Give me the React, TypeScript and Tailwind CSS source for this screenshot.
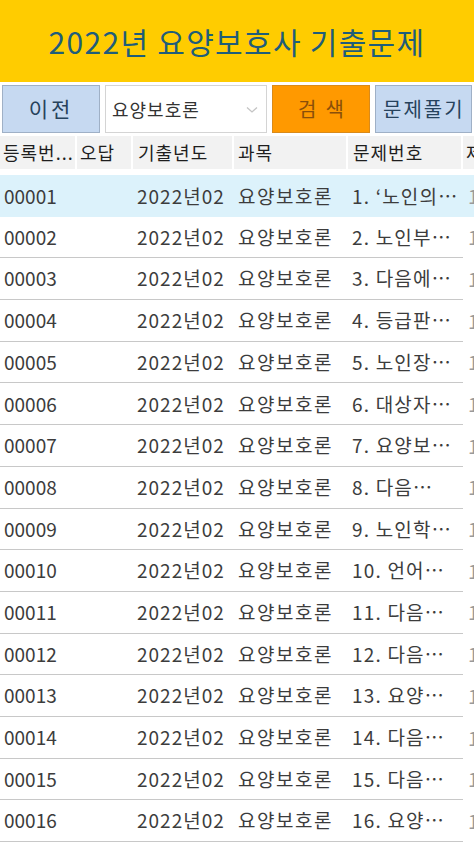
import React from "react";

const FONT = { fontFamily: '"Noto Sans CJK KR", "Noto Sans", sans-serif' };

const questions = [
  "1. ‘노인의…",
  "2. 노인부…",
  "3. 다음에…",
  "4. 등급판…",
  "5. 노인장…",
  "6. 대상자…",
  "7. 요양보…",
  "8. 다음…",
  "9. 노인학…",
  "10. 언어…",
  "11. 다음…",
  "12. 다음…",
  "13. 요양…",
  "14. 다음…",
  "15. 다음…",
  "16. 요양…",
];

export default function App() {
  return (
    <div className="w-[474px] h-[846px] overflow-hidden bg-white" style={FONT}>
      {/* 상단 타이틀 */}
      <div className="h-[82px] bg-[#ffcc00] flex items-center justify-center">
        <h1 className="text-[30px] text-[#1f5d7a] tracking-[1.3px] leading-none">
          2022년 요양보호사 기출문제
        </h1>
      </div>

      {/* 버튼 줄 */}
      <div className="flex gap-[5px] px-[2px] pt-[3px] bg-white">
        <button className="w-[98px] h-[48px] bg-[#c6d9f1] border border-[#9fb0c6] text-[21px] text-[#26425c] tracking-[3px]">
          이전
        </button>
        <div className="w-[162px] h-[48px] bg-white border border-[#d4d4d4] flex items-center justify-between pl-[6px] pr-[8px]">
          <span className="text-[18px] text-[#333] tracking-[1px]">요양보호론</span>
          <svg width="12" height="8" viewBox="0 0 12 8" className="mt-[2px]">
            <path d="M1 1.5 L6 6 L11 1.5" fill="none" stroke="#c4c4c4" strokeWidth="1.3" />
          </svg>
        </div>
        <button className="w-[98px] h-[48px] bg-[#ff9900] border border-[#d98a1a] text-[20px] text-[#8a4f0a]">
          검&nbsp;&nbsp;색
        </button>
        <button className="flex-1 h-[48px] bg-[#c6d9f1] border border-[#9fb0c6] text-[20px] text-[#26425c] tracking-[2px] whitespace-nowrap overflow-hidden text-left pl-[7px]">
          문제풀기
        </button>
      </div>

      {/* 헤더 */}
      <div className="flex h-[33px] mt-[3px] text-[18px] text-[#1e1e1e] tracking-[1px] whitespace-nowrap">
        <div className="w-[75px] bg-[#f2f2f2] pl-[3px] flex items-center">등록번...</div>
        <div className="w-[54px] ml-[2px] bg-[#f2f2f2] pl-[3px] flex items-center">오답</div>
        <div className="w-[99px] ml-[2px] bg-[#f2f2f2] pl-[5px] flex items-center">기출년도</div>
        <div className="w-[112px] ml-[2px] bg-[#f2f2f2] pl-[4px] flex items-center">과목</div>
        <div className="w-[113px] ml-[2px] bg-[#f2f2f2] pl-[5px] flex items-center">문제번호</div>
        <div className="flex-1 ml-[2px] bg-[#f2f2f2] pl-[3px] flex items-center overflow-hidden">제</div>
      </div>

      {/* 목록 */}
      <div className="mt-[6px]">
        {questions.map((q, i) => (
          <div
            key={i}
            className={`flex h-[41.7px] items-center text-[19px] text-[#3c3c3c] whitespace-nowrap ${
              i === 0 ? "bg-[#dcf2fb]" : ""
            }`}
          >
            <div
              className={`flex w-[463px] h-full items-center ${
                i === 0 ? "" : "border-b border-[#c8c8c8]"
              }`}
            >
              <div className="w-[132px] pl-[4px]">{String(i + 1).padStart(5, "0")}</div>
              <div className="w-[101px] pl-[5px] tracking-[1px]">2022년02</div>
              <div className="w-[114px] pl-[5px] tracking-[1.5px]">요양보호론</div>
              <div className="w-[116px] pl-[5px] tracking-[1.2px] overflow-hidden">{q}</div>
            </div>
            <div className="flex-1 pl-[5px] text-[#9a9a9a] overflow-hidden">1</div>
          </div>
        ))}
      </div>
    </div>
  );
}
